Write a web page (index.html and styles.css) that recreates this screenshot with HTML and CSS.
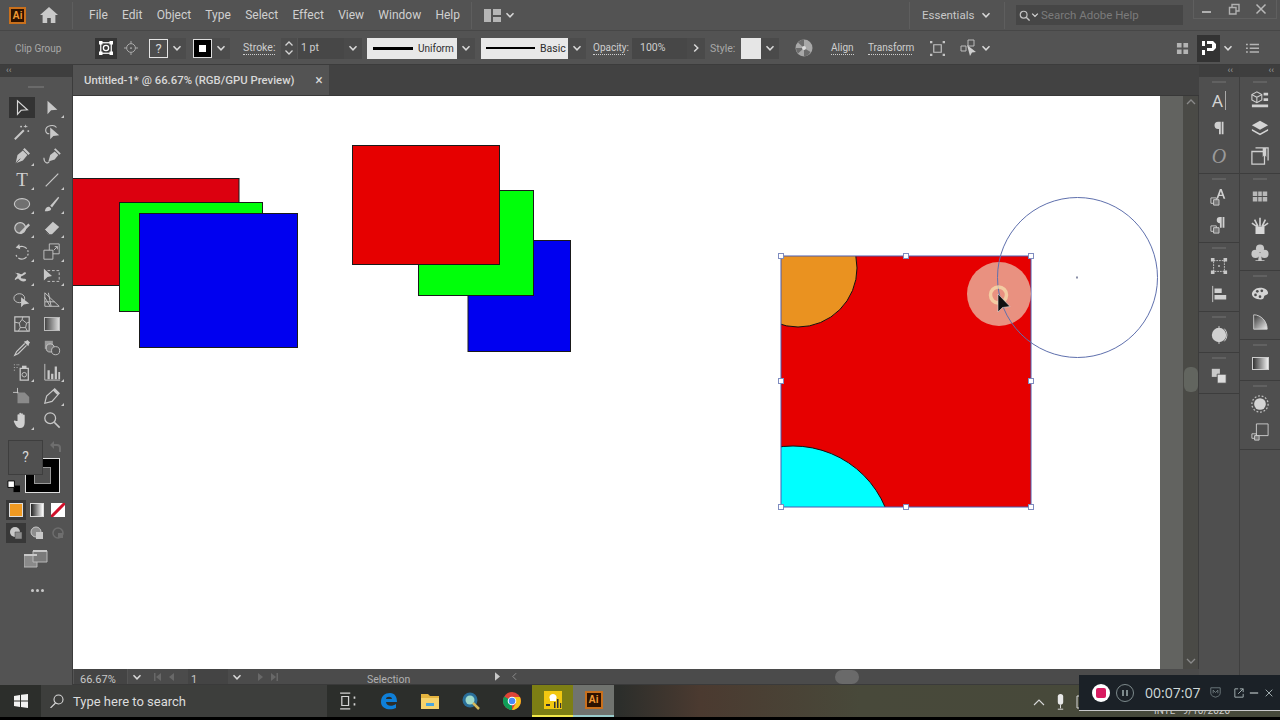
FILE: index.html
```html
<!DOCTYPE html>
<html lang="en">
<head>
    <meta charset="UTF-8">
    <title>Adobe Illustrator</title>
    <link rel="stylesheet" href="styles.css">
</head>
<body>
    <svg class="defs" width="0" height="0">
        <symbol id="chev" viewBox="0 0 10 10"><path d="M1.5 3.2 5 6.8l3.5-3.6" fill="none" stroke="#d8d8d8" stroke-width="1.5"/></symbol>
    </svg>

    <!-- menu bar -->
    <header class="menubar">
        <div class="ai-logo">Ai</div>
        <svg class="home" viewBox="0 0 18 16"><path d="M9 0 0 8h2.6v8h4.6v-5h3.6v5h4.6V8H18z" fill="#c9c9c9"/></svg>
        <div class="vsep home-sep"></div>
        <nav class="menu">
            <span>File</span><span>Edit</span><span>Object</span><span>Type</span><span>Select</span><span>Effect</span><span>View</span><span>Window</span><span>Help</span>
        </nav>
        <div class="vsep menu-sep"></div>
        <svg class="arrange" viewBox="0 0 17 13"><path d="M0 0h7v13H0zM9 0h8v6H9zM9 8h8v5H9z" fill="#b5b5b5"/></svg>
        <svg class="chev arrange-chev"><use href="#chev"/></svg>
        <div class="menubar-right">
            <div class="vsep"></div>
            <span class="workspace-name">Essentials</span>
            <svg class="chev"><use href="#chev"/></svg>
            <div class="vsep ws-sep"></div>
            <div class="helpsearch">
                <svg class="mag" viewBox="0 0 13 13"><circle cx="5.5" cy="5.5" r="4" fill="none" stroke="#c4c4c4" stroke-width="1.4"/><path d="m8.5 8.5 4 4" stroke="#c4c4c4" stroke-width="1.6"/></svg>
                <svg class="chev small"><use href="#chev"/></svg>
                <span>Search Adobe Help</span>
            </div>
            <div class="winctl">
                <svg viewBox="0 0 12 12"><path d="M1 8h9v2H1z" fill="#b0b0b0"/></svg>
                <svg viewBox="0 0 12 12"><path d="M1.5 4.5H8V11H1.5zM4 4V1.5h7V8H8.5" fill="none" stroke="#b0b0b0" stroke-width="1.4"/></svg>
                <svg viewBox="0 0 12 12"><path d="m1.5 1.5 9 9m0-9-9 9" stroke="#b8b8b8" stroke-width="1.5"/></svg>
            </div>
        </div>
    </header>

    <!-- control bar -->
    <section class="controlbar">
        <span class="clip-label">Clip Group</span>
        <div class="iso-btn">
            <svg viewBox="0 0 16 16"><rect x="2" y="2" width="12" height="12" fill="none" stroke="#fff" stroke-width="1.4"/><circle cx="8" cy="8" r="3" fill="none" stroke="#fff" stroke-width="1.5"/><path d="M0 0h4v4H0zM12 0h4v4h-4zM0 12h4v4H0zM12 12h4v4h-4z" fill="#fff"/></svg>
        </div>
        <svg class="target" viewBox="0 0 16 16"><circle cx="8" cy="8" r="5" fill="none" stroke="#b5b5b5"/><circle cx="8" cy="8" r="1" fill="#b5b5b5"/><path d="M8 0v3M8 13v3M0 8h3M13 8h3" stroke="#b5b5b5"/></svg>
        <div class="fill-swatch">?</div>
        <div class="cbchev"><svg class="chev"><use href="#chev"/></svg></div>
        <div class="stroke-swatch"><i></i></div>
        <div class="cbchev"><svg class="chev"><use href="#chev"/></svg></div>
        <span class="dotted stroke-label">Stroke:</span>
        <div class="stepper">
            <svg viewBox="0 0 10 18"><path d="M1.5 6.5 5 3l3.5 3.5M1.5 11.5 5 15l3.5-3.5" fill="none" stroke="#d4d4d4" stroke-width="1.3"/></svg>
        </div>
        <div class="field weight-field">1 pt</div>
        <div class="cbchev joined"><svg class="chev"><use href="#chev"/></svg></div>
        <div class="stroke-drop uniform"><i class="thick"></i><span>Uniform</span></div>
        <div class="cbchev"><svg class="chev"><use href="#chev"/></svg></div>
        <div class="stroke-drop basic"><i></i><span>Basic</span></div>
        <div class="cbchev"><svg class="chev"><use href="#chev"/></svg></div>
        <span class="dotted opacity-label">Opacity:</span>
        <div class="field opacity-field">100%</div>
        <div class="cbchev joined"><svg class="chev right"><use href="#chev"/></svg></div>
        <span class="style-label">Style:</span>
        <div class="style-swatch"></div>
        <div class="cbchev joined"><svg class="chev"><use href="#chev"/></svg></div>
        <svg class="recolor" viewBox="0 0 18 18"><circle cx="9" cy="9" r="8.5" fill="#a8a8a8"/><path d="M9 9 3 3.5A8 8 0 0 1 9 .5zM9 9l6.5 4A8 8 0 0 1 9 17.5zM9 9H1a8 8 0 0 0 2 5.5z" fill="#6c6c6c"/><circle cx="9" cy="9" r="2" fill="#dcdcdc"/></svg>
        <span class="dotted align-link">Align</span>
        <span class="dotted transform-link">Transform</span>
        <svg class="ctl-icon first-icon" viewBox="0 0 16 16"><path d="M4 4h8v8H4z" fill="none" stroke="#c4c4c4" stroke-width="1.2"/><path d="M0 0h2.5v2.5H0zM13.5 0H16v2.5h-2.5zM0 13.5h2.5V16H0zM13.5 13.5H16V16h-2.5z" fill="#c4c4c4"/></svg>
        <svg class="ctl-icon second-icon" viewBox="0 0 18 18"><path d="M1 7h5v5H1zM8 1h6v6H8z" fill="none" stroke="#bcbcbc"/><path d="m7 6 9 7-4 .5L10 17z" fill="#cfcfcf"/></svg>
        <svg class="chev second-chev"><use href="#chev"/></svg>
        <div class="cb-right">
            <svg class="ctl-icon" viewBox="0 0 14 14"><path d="M1 1h5v5H1zM8 1h5v5H8zM1 8h5v5H1zM8 8h5v5H8z" fill="#b4b4b4"/></svg>
            <div class="panel-toggle"><svg viewBox="0 0 14 16"><path d="M0 1h3v5H0zM0 10h3v5H0zM5 1h6l3 3v4l-3 3H5V8h5V4H5z" fill="#fff"/></svg></div>
            <svg class="chev"><use href="#chev"/></svg>
            <svg class="ctl-icon list-icon" viewBox="0 0 14 12"><path d="M0 1h2v1.5H0zM4 1h10v1.5H4zM0 5h2v1.5H0zM4 5h10v1.5H4zM0 9h2v1.5H0zM4 9h10v1.5H4z" fill="#b4b4b4"/></svg>
        </div>
    </section>

    <main class="workspace">
        <!-- tools -->
        <aside class="toolbar">
            <div class="collapse">&lsaquo;&lsaquo;</div>
            <div class="grip"></div>
            <div class="tools">
                <div class="tool active"><svg viewBox="0 0 20 20"><path d="M5 2v15l4-4.5 7-.5z" fill="none" stroke="#d8d8d8" stroke-width="1.3"/></svg></div>
                <div class="tool more"><svg viewBox="0 0 20 20"><path d="M5 2v15l4-4.5 7-.5z" fill="#c8c8c8"/></svg></div>
                <div class="tool"><svg viewBox="0 0 20 20"><path d="m2 18 10-10" stroke="#c8c8c8" stroke-width="2.2"/><path d="M14 2v3M12 4h4M17 8v2M16 9h2M9 3v2M8 4h2" stroke="#c8c8c8"/></svg></div>
                <div class="tool"><svg viewBox="0 0 20 20"><path d="M3 8c0-5 9-7 12-3M3 8c0 3 2 4 4 4" fill="none" stroke="#c8c8c8" stroke-width="1.2"/><path d="M8 5v13l3.5-3.5 6.5-1z" fill="#c8c8c8"/></svg></div>
                <div class="tool more"><svg viewBox="0 0 20 20"><path d="M3 18 5 9l6-5 5 5-5 6z" fill="#c8c8c8"/><path d="m12 2 6 6" stroke="#c8c8c8" stroke-width="2.5"/><path d="m3 18 5-5" stroke="#535353"/></svg></div>
                <div class="tool"><svg viewBox="0 0 20 20"><path d="M6 16 8 9l5-4 4 4-4 5z" fill="#c8c8c8"/><path d="m13 2 6 6" stroke="#c8c8c8" stroke-width="2"/><path d="M1 12c0 6 5 7 6 4" fill="none" stroke="#c8c8c8" stroke-width="1.2"/></svg></div>
                <div class="tool more"><span class="tool-t">T</span></div>
                <div class="tool more"><svg viewBox="0 0 20 20"><path d="m3 17 14-14" stroke="#c8c8c8" stroke-width="1.3"/></svg></div>
                <div class="tool more"><svg viewBox="0 0 20 20"><ellipse cx="10" cy="10" rx="8.5" ry="6" fill="#707070" stroke="#c8c8c8" stroke-width="1.2"/></svg></div>
                <div class="tool more"><svg viewBox="0 0 20 20"><path d="M2 18c1-4 2-5 5-5l2 2c0 3-3 3-7 3z" fill="#c8c8c8"/><path d="m8 12 9-10 1 1-8 11z" fill="#c8c8c8"/></svg></div>
                <div class="tool more"><svg viewBox="0 0 20 20"><circle cx="8" cy="10" r="6" fill="#707070" stroke="#c8c8c8" stroke-width="1.4"/><path d="m8 16 10-10" stroke="#c8c8c8" stroke-width="2.5"/></svg></div>
                <div class="tool more"><svg viewBox="0 0 20 20"><path d="m2 12 9-9 7 6-8 8H6z" fill="#c8c8c8"/><path d="m2 12 5 5" stroke="#535353"/></svg></div>
                <div class="tool more"><svg viewBox="0 0 20 20"><path d="M6 5a7 7 0 1 1-3 7" fill="none" stroke="#c8c8c8" stroke-width="1.3" stroke-dasharray="10 2 2 2 2 2"/><path d="m7 1-4 4 5 2z" fill="#c8c8c8"/></svg></div>
                <div class="tool more"><svg viewBox="0 0 20 20"><path d="M7 1h11v11H7z" fill="none" stroke="#c8c8c8"/><path d="M1 8h10v10H1z" fill="#535353" stroke="#c8c8c8"/><path d="m12 8 4-4m-3 0h3v3" fill="none" stroke="#c8c8c8"/></svg></div>
                <div class="tool more"><svg viewBox="0 0 20 20"><path d="M3 8c2-3 4 0 6 0s3-3 5-2-2 3-4 4-2 3 2 3 3 3 0 3-5-2-6-3-4 3-4 1 3-3 3-5-3 0-2-4z" fill="#c8c8c8"/></svg></div>
                <div class="tool more"><svg viewBox="0 0 20 20"><path d="M1 2v13l4-4 5-1z" fill="#c8c8c8"/><path d="M5 4h13v12H5" fill="none" stroke="#c8c8c8" stroke-dasharray="3 2"/></svg></div>
                <div class="tool more"><svg viewBox="0 0 20 20"><ellipse cx="7" cy="8" rx="6" ry="5" fill="none" stroke="#c8c8c8"/><path d="M9 7v11l3-3 6-1z" fill="#c8c8c8"/></svg></div>
                <div class="tool more"><svg viewBox="0 0 20 20"><path d="M2 2v15h16zM2 7l6 10M2 12h11M6 2l3 15" fill="none" stroke="#c8c8c8"/></svg></div>
                <div class="tool"><svg viewBox="0 0 20 20"><path d="M2 2h16v16H2z" fill="none" stroke="#c8c8c8" stroke-width="1.3"/><path d="M2 8l5 1 3-4 1-3M7 9l1 5-2 4M10 5l5 4 3-1M8 14l6 0 1-5M14 14l2 4" fill="none" stroke="#c8c8c8"/></svg></div>
                <div class="tool"><div class="tool-grad"></div></div>
                <div class="tool"><svg viewBox="0 0 20 20"><path d="m13 5-9 9-2 4 4-2 9-9" fill="none" stroke="#c8c8c8" stroke-width="1.3"/><path d="m12 3 5 5 1-3 1-1-3-3-1 1z" fill="#c8c8c8"/></svg></div>
                <div class="tool"><svg viewBox="0 0 20 20"><path d="M2 2h9v9H2z" fill="#9a9a9a"/><circle cx="8" cy="10" r="4.5" fill="#777" stroke="#c8c8c8"/><circle cx="14" cy="13" r="4.5" fill="#535353" stroke="#c8c8c8"/></svg></div>
                <div class="tool more"><svg viewBox="0 0 20 20"><path d="M8 6h9v13H8z" fill="none" stroke="#c8c8c8" stroke-width="1.4"/><circle cx="12.5" cy="13" r="2.5" fill="none" stroke="#c8c8c8"/><path d="M10 3h5v3h-5z" fill="#c8c8c8"/><path d="M1 2h1M4 2h1M1 5h1M4 5h1M6 2h1M1 8h1" stroke="#c8c8c8"/></svg></div>
                <div class="tool more"><svg viewBox="0 0 20 20"><path d="M2 1v18h17" fill="none" stroke="#c8c8c8"/><path d="M5 8h2.5v10H5zM9 12h2.5v6H9zM13 4h2.5v14H13zM17 10h2v8h-2z" fill="#c8c8c8"/></svg></div>
                <div class="tool"><svg viewBox="0 0 20 20"><path d="M5 6h8l5 5v7H5z" fill="#8a8a8a"/><path d="M0 6h6M5 1v6" stroke="#c8c8c8"/></svg></div>
                <div class="tool more"><svg viewBox="0 0 20 20"><path d="m2 18 2-8 9-8 5 5-8 9z" fill="none" stroke="#c8c8c8" stroke-width="1.3"/><path d="m11 4 5 5 2-2-5-5z" fill="#c8c8c8"/></svg></div>
                <div class="tool more"><svg viewBox="0 0 20 20"><path d="M5 11V4.5a1 1 0 0 1 2 0V9V3a1 1 0 0 1 2 0v6V3.5a1 1 0 0 1 2 0V9V5a1 1 0 0 1 2 0v8c0 4-2 6-5 6-4 0-5-3-7-7-.5-1 1-2 2-1z" fill="#d0d0d0"/></svg></div>
                <div class="tool"><svg viewBox="0 0 20 20"><circle cx="8" cy="8" r="6" fill="none" stroke="#c8c8c8" stroke-width="1.4"/><path d="m12.5 12.5 6 6" stroke="#c8c8c8" stroke-width="1.8"/></svg></div>
            </div>

            <div class="fillstroke">
                <div class="stroke-box"><i></i></div>
                <div class="fill-box">?</div>
                <svg class="swap" viewBox="0 0 14 14"><path d="M4 0h7v7H4z" fill="#000" transform="translate(3 6)"/><path d="M1 1h7v7H1z" fill="#fff" stroke="#000"/></svg>
                <svg class="undo" viewBox="0 0 12 12"><path d="M1 4h6a3 3 0 0 1 3 3v4" fill="none" stroke="#6e6e6e" stroke-width="2"/><path d="M4 0v8L0 4z" fill="#6e6e6e"/></svg>
            </div>
            <div class="modes">
                <div class="mode selected"><i class="orange"></i></div>
                <div class="mode"><i class="grad"></i></div>
                <div class="mode"><svg viewBox="0 0 14 14"><path d="M0 0h14v14H0z" fill="#fff"/><path d="m0 14 14-14" stroke="#d0102a" stroke-width="3"/></svg></div>
            </div>
            <div class="modes draw">
                <div class="mode selected"><svg viewBox="0 0 14 14"><circle cx="6" cy="6" r="5" fill="#c8c8c8"/><path d="M6 6h7v7H6z" fill="#8d8d8d" stroke="#3e3e3e" stroke-width=".5"/></svg></div>
                <div class="mode"><svg viewBox="0 0 14 14"><circle cx="6" cy="6" r="5" fill="#8d8d8d" stroke="#c8c8c8"/><path d="M6 6h7v7H6z" fill="#c8c8c8"/></svg></div>
                <div class="mode"><svg viewBox="0 0 14 14"><circle cx="7" cy="7" r="5" fill="none" stroke="#6e6e6e" stroke-width="1.5"/><path d="M7 7h5v5H7z" fill="#6e6e6e"/></svg></div>
            </div>
            <svg class="screenmode" viewBox="0 0 24 18"><path d="M0 5h13v12H0z" fill="#8a8a8a" stroke="#b8b8b8"/><path d="M9 1h14v11H9z" fill="#7a7a7a" stroke="#b8b8b8"/><path d="M0 5h13M9 1h14" stroke="#c8c8c8" stroke-width="2"/></svg>
            <div class="dots"><i></i><i></i><i></i></div>
        </aside>

        <!-- document -->
        <div class="doc">
            <div class="tabs">
                <div class="tab"><span>Untitled-1* @ 66.67% (RGB/GPU Preview)</span><b>&times;</b></div>
            </div>
            <div class="doc-main">
                <div class="canvas">
                    <svg class="art" viewBox="73 96 1087 573">
                        <defs>
                            <clipPath id="bigclip"><rect x="781" y="256" width="250" height="251"/></clipPath>
                        </defs>
                        <g stroke="#1a1a1a" stroke-width="1">
                            <rect x="70" y="178.5" width="169" height="107" fill="#dc000f"/>
                            <rect x="119.5" y="202.5" width="143" height="109" fill="#00ff0a"/>
                            <rect x="139.5" y="213.5" width="158" height="134" fill="#0000f0"/>
                            <rect x="468" y="240.5" width="102.5" height="111" fill="#0000f0"/>
                            <rect x="418.5" y="190.5" width="115" height="105" fill="#00ff0a"/>
                            <rect x="352.5" y="145.5" width="147" height="119" fill="#e60000"/>
                        </g>
                        <rect x="781" y="256" width="250" height="251" fill="#e60000"/>
                        <g clip-path="url(#bigclip)" stroke="#111" stroke-width="1">
                            <circle cx="798" cy="268" r="59" fill="#ea9220"/>
                            <circle cx="793" cy="546" r="100" fill="#00ffff"/>
                        </g>
                        <rect x="781" y="256" width="250" height="251" fill="none" stroke="#4a5cb0" stroke-width="1"/>
                        <circle cx="999" cy="294" r="32" fill="#eab5a0" fill-opacity=".8"/>
                        <circle cx="1077.5" cy="277.5" r="80" fill="none" stroke="#5f70ad" stroke-width="1"/>
                        <rect x="1076" y="276.5" width="2" height="2" fill="#8a8fa8"/>
                        <g fill="#fff" stroke="#7f8cc0" stroke-width="1">
                            <rect x="778.5" y="253.5" width="5" height="5"/>
                            <rect x="903.5" y="253.5" width="5" height="5"/>
                            <rect x="1028.5" y="253.5" width="5" height="5"/>
                            <rect x="778.5" y="378.5" width="5" height="5"/>
                            <rect x="1028.5" y="378.5" width="5" height="5"/>
                            <rect x="778.5" y="504.5" width="5" height="5"/>
                            <rect x="903.5" y="504.5" width="5" height="5"/>
                            <rect x="1028.5" y="504.5" width="5" height="5"/>
                        </g>
                        <circle cx="998.5" cy="295" r="8" fill="none" stroke="#f6e5b0" stroke-width="3.5" stroke-opacity=".7"/>
                        <path d="M998 294v18l4.5-4.5 7.5-1z" fill="#111" stroke="#ddd" stroke-width=".6"/>
                    </svg>
                </div>
                <div class="side-strip"></div>
                <div class="vscroll">
                    <svg class="sc-up" viewBox="0 0 10 6"><path d="m1 5 4-4 4 4" fill="none" stroke="#8a8a8a" stroke-width="1.3"/></svg>
                    <div class="vthumb"></div>
                    <svg class="sc-down" viewBox="0 0 10 6"><path d="m1 1 4 4 4-4" fill="none" stroke="#8a8a8a" stroke-width="1.3"/></svg>
                </div>
            </div>
            <footer class="status">
                <div class="zoom-field">66.67%</div>
                <div class="st-chev"><svg class="chev"><use href="#chev"/></svg></div>
                <svg class="st-nav" viewBox="0 0 26 8"><path d="M0 0h1.5v8H0zM7 0v8L2 4zM20 0v8l-5-4z" fill="#686868"/></svg>
                <div class="page-field">1</div>
                <div class="st-chev"><svg class="chev"><use href="#chev"/></svg></div>
                <svg class="st-nav after" viewBox="0 0 26 8"><path d="M6 0v8l5-4zM19 0v8l5-4zM24.5 0H26v8h-1.5z" fill="#686868"/></svg>
                <span class="st-label">Selection</span>
                <svg class="st-play" viewBox="0 0 6 10"><path d="M0 0v10l6-5z" fill="#c8c8c8"/></svg>
                <svg class="st-back" viewBox="0 0 6 10"><path d="M5 1 1 5l4 4" fill="none" stroke="#999"/></svg>
                <div class="hthumb"></div>
            </footer>
        </div>

        <!-- collapsed panels -->
        <aside class="panels">
            <div class="panel-col">
                <div class="collapse">&lsaquo;&lsaquo;</div>
                <div class="pgroup">
                    <div class="picon"><span class="char-a">A</span></div>
                    <div class="picon"><svg viewBox="0 0 20 20"><path d="M12 3H9a4 4 0 0 0 0 8h1v6h2zM13 3h2v14h-2z" fill="#d0d0d0"/></svg></div>
                    <div class="picon"><span class="open-o">O</span></div>
                </div>
                <div class="pgroup">
                    <div class="picon"><svg viewBox="0 0 20 20"><path d="m7 12 4-11h2l4 11h-2l-1-3h-4l-1 3zm3.7-4.5h2.6L12 3.5z" fill="#d0d0d0"/><path d="M1 11h6v6H1z" fill="none" stroke="#d0d0d0"/><path d="M4 13h6v6H4z" fill="#777" stroke="#d0d0d0"/></svg></div>
                    <div class="picon"><svg viewBox="0 0 20 20"><path d="M13 1h-2a3 3 0 0 0 0 7v5h2zM14 1h2v12h-2z" fill="#d0d0d0"/><path d="M1 11h6v6H1z" fill="none" stroke="#d0d0d0"/><path d="M4 13h6v6H4z" fill="#777" stroke="#d0d0d0"/></svg></div>
                </div>
                <div class="pgroup">
                    <div class="picon"><svg viewBox="0 0 20 20"><path d="M4 4h12v12H4z" fill="none" stroke="#c8c8c8" stroke-dasharray="2 1"/><path d="M1 1h4v4H1zM15 1h4v4h-4zM1 15h4v4H1zM15 15h4v4h-4z" fill="#c8c8c8"/><circle cx="10" cy="10" r="1" fill="#c8c8c8"/></svg></div>
                    <div class="picon"><svg viewBox="0 0 20 20"><path d="M3 1v18" stroke="#d0d0d0"/><path d="M5 4h8v5H5zM5 11h13v5H5z" fill="#d0d0d0"/></svg></div>
                </div>
                <div class="pgroup">
                    <div class="picon"><svg viewBox="0 0 20 20"><circle cx="10" cy="10" r="8" fill="#d0d0d0"/><path d="M16 3a10 10 0 0 1 0 14M10 0v3M10 17v3" fill="none" stroke="#d0d0d0"/></svg></div>
                </div>
                <div class="pgroup">
                    <div class="picon"><svg viewBox="0 0 20 20"><path d="M2 2h9v9H2z" fill="#c8c8c8"/><path d="M8 8h10v10H8z" fill="#dcdcdc" stroke="#4e4e4e"/></svg></div>
                </div>
            </div>
            <div class="panel-col">
                <div class="collapse">&lsaquo;&lsaquo;</div>
                <div class="pgroup">
                    <div class="picon"><svg viewBox="0 0 20 20"><path d="M6.5 1 1 4v6l5.5 3L12 10V4zM1 4l5.5 3L12 4M6.5 7v6" fill="none" stroke="#d0d0d0" stroke-width="1.2"/><path d="M14 2h5v3h-5zM14 8h5v3h-5zM1 15h18v3H1z" fill="#d0d0d0"/></svg></div>
                    <div class="picon"><svg viewBox="0 0 20 20"><path d="m10 2 9 5-9 5-9-5z" fill="#d4d4d4"/><path d="m1 11 9 5 9-5v2l-9 5-9-5z" fill="#d4d4d4"/></svg></div>
                    <div class="picon"><svg viewBox="0 0 20 20"><path d="M5 1h14v14" fill="none" stroke="#d0d0d0" stroke-width="1.4"/><path d="M1 5h14v14H1z" fill="none" stroke="#d0d0d0" stroke-width="1.4"/><path d="M13 1h4v10l-2-2-2 2z" fill="#d0d0d0"/></svg></div>
                </div>
                <div class="pgroup">
                    <div class="picon"><svg viewBox="0 0 20 20"><path d="M2 4h5v5H2zM8 4h4v5H8zM13 4h5v5h-5zM2 10h5v5H2zM8 10h4v5H8zM13 10h5v5h-5z" fill="#b8b8b8"/></svg></div>
                    <div class="picon"><svg viewBox="0 0 20 20"><path d="M5 12h10v8H5z" fill="#d8d8d8"/><path d="M8 12 4 4M10 12V2M12 12l4-8M7 12 1 8M13 12l6-4" stroke="#d0d0d0" stroke-width="1.8"/></svg></div>
                    <div class="picon"><svg viewBox="0 0 20 20"><circle cx="10" cy="5" r="4.5" fill="#c8c8c8"/><circle cx="5" cy="11" r="4.5" fill="#c8c8c8"/><circle cx="15" cy="11" r="4.5" fill="#c8c8c8"/><path d="M9 10h2l1 8h3v1H5v-1h3z" fill="#c8c8c8"/></svg></div>
                </div>
                <div class="pgroup">
                    <div class="picon"><svg viewBox="0 0 20 20"><path d="M10 3c6 0 9 3 9 6 0 2-3 2-4 3s0 4-4 4C5 16 1 13 1 10s4-7 9-7z" fill="#d4d4d4"/><circle cx="7" cy="7" r="1.5" fill="#4e4e4e"/><circle cx="12" cy="6.5" r="1.5" fill="#4e4e4e"/><circle cx="5" cy="11" r="1.5" fill="#4e4e4e"/><circle cx="10" cy="13" r="1.5" fill="#4e4e4e"/></svg></div>
                    <div class="picon"><svg viewBox="0 0 20 20"><defs><linearGradient id="pg" x1="0" y1="0" x2="1" y2="1"><stop offset="0" stop-color="#333"/><stop offset="1" stop-color="#eee"/></linearGradient></defs><path d="M3 2c8 0 15 7 15 16H3z" fill="url(#pg)" stroke="#d0d0d0"/></svg></div>
                </div>
                <div class="pgroup">
                    <div class="picon"><div class="gradient-icon"></div></div>
                </div>
                <div class="pgroup">
                    <div class="picon"><svg viewBox="0 0 20 20"><circle cx="10" cy="10" r="6.5" fill="#d4d4d4"/><circle cx="10" cy="10" r="9" fill="none" stroke="#c0c0c0" stroke-width="1.4" stroke-dasharray="2 2"/></svg></div>
                    <div class="picon"><svg viewBox="0 0 20 20"><path d="M6 1h13v13H6z" fill="none" stroke="#d0d0d0"/><path d="M1 12h5v5H1z" fill="none" stroke="#d0d0d0"/><path d="M4 14h5v5H4z" fill="#777" stroke="#d0d0d0"/></svg></div>
                </div>
            </div>
        </aside>
    </main>

    <!-- windows taskbar -->
    <footer class="taskbar">
        <div class="start"><svg viewBox="0 0 14 14"><path d="M0 2 6 1v5.5H0zM7 .8 14 0v6.5H7zM0 7.5h6V13l-6-1zM7 7.5h7V14l-7-1z" fill="#f2f2f2"/></svg></div>
        <div class="search">
            <svg viewBox="0 0 14 14"><circle cx="8.5" cy="5.5" r="4.5" fill="none" stroke="#d8d8d8" stroke-width="1.1"/><path d="M5.5 9 .5 14" stroke="#d8d8d8" stroke-width="1.1"/></svg>
            <span>Type here to search</span>
        </div>
        <div class="task-icons">
            <div class="task"><svg viewBox="0 0 16 16"><path d="M1 1h9M1 15h9M2.5 4h6v8h-6z" fill="none" stroke="#d4d4d4" stroke-width="1.1"/><path d="M13 4h1.500v2H13zM13 10h1.500v2H13z" fill="#d4d4d4"/></svg></div>
            <div class="task"><svg viewBox="0 0 18 18"><path d="M1 10C1 4 5 1 10 1c5 0 7 4 7 9H6c0 4 6 5 10 2v4c-6 3-15 1-15-6zm5-3h6c0-3-6-3-6 0z" fill="#0f7fd8"/></svg></div>
            <div class="task"><svg viewBox="0 0 18 16"><path d="M0 1h7l2 2h9v13H0z" fill="#e5b43f"/><path d="M0 5h18v11H0z" fill="#f6d36c"/><path d="M5 10h8v3H5z" fill="#4aa6dd"/></svg></div>
            <div class="task"><svg viewBox="0 0 18 18"><circle cx="8" cy="8" r="7.5" fill="#2a6f9a"/><circle cx="8" cy="8" r="4.5" fill="#9fd9c9"/><path d="m11 11 6 6" stroke="#d6b85a" stroke-width="2.5"/></svg></div>
            <div class="task"><svg viewBox="0 0 18 18"><circle cx="9" cy="9" r="9" fill="#dd4437"/><path d="M9 9 1.2 4.5A9 9 0 0 0 9 18z" fill="#0f9d58"/><path d="M9 5h7.900A9 9 0 0 1 9 18l4-7z" fill="#f5c518"/><circle cx="9" cy="9" r="4.300" fill="#fff"/><circle cx="9" cy="9" r="3.300" fill="#4a8af4"/></svg></div>
            <div class="task pbi"><svg viewBox="0 0 18 18"><path d="M0 0h18v18H0z" fill="#f2c811"/><path d="M9 3a3.5 3.5 0 0 1 3 5.5V10H6V8.5A3.5 3.5 0 0 1 9 3z" fill="#fff"/><path d="M10 17v-6h1.500v6zM13 17v-9h1.500v9zM16 17v-5h1.200v5zM2 13h4v2H2z" fill="#333"/></svg></div>
            <div class="task ai-task"><div class="ai-logo">Ai</div></div>
        </div>
        <div class="tray">
            <svg viewBox="0 0 12 8"><path d="m1 7 5-5 5 5" fill="none" stroke="#d8d8d8" stroke-width="1.1"/></svg>
            <svg class="mic" viewBox="0 0 10 18"><rect x="2" y="0" width="6" height="12" rx="3" fill="#e8e8e8"/><path d="M5 12v4M2 17h6" stroke="#e8e8e8"/></svg>
            <svg viewBox="0 0 12 14"><path d="M1 1h10v12H1z" fill="none" stroke="#d8d8d8"/></svg>
        </div>
        <div class="clock">INTL &nbsp; 9/10/2020</div>
    </footer>

    <!-- screen recorder widget -->
    <div class="recorder">
        <div class="rec-stop"><i></i></div>
        <div class="rec-pause"><i></i><i></i></div>
        <span class="rec-time">00:07:07</span>
        <svg class="rec-shield" viewBox="0 0 14 14"><path d="M1 1h12v7c0 3-3 4-6 5-3-1-6-2-6-5z" fill="none" stroke="#7d8a8c"/><path d="M4 8V4l3 3 3-3v4" fill="none" stroke="#7d8a8c"/></svg>
        <svg class="rec-ctl expand" viewBox="0 0 12 12"><path d="M5 1H1v10h10V7M7 1h4v4M11 1 5 7" fill="none" stroke="#9eaaac" stroke-width="1.2"/></svg>
        <svg class="rec-ctl" viewBox="0 0 12 12"><path d="M1 6h10" stroke="#b4bcbd" stroke-width="1.5"/></svg>
        <svg class="rec-ctl" viewBox="0 0 12 12"><path d="m2 2 8 8m0-8-8 8" stroke="#9eaaac" stroke-width="1.2"/></svg>
    </div>
</body>
</html>
```

FILE: styles.css
```css
* {
    box-sizing: border-box;
}
html, body {
    margin: 0;
    height: 100%;
}
body {
    width: 1280px;
    height: 720px;
    overflow: hidden;
    position: relative;
    display: flex;
    flex-direction: column;
    background-color: #535353;
    color: #d4d4d4;
    font-family: Roboto, "Noto Sans", sans-serif;
    font-size: 12px;
}
svg {
    display: block;
    flex: none;
}
.defs {
    position: absolute;
}
.chev {
    width: 10px;
    height: 10px;
}
.chev.small {
    width: 8px;
    height: 8px;
}
.chev.right {
    transform: rotate(-90deg);
}
.vsep {
    width: 1px;
    height: 27px;
    background-color: #5e5e5e;
}

/* menu bar */
.menubar {
    height: 31px;
    display: flex;
    align-items: center;
    padding-left: 9px;
    background-color: #535353;
    border-bottom: 1px solid #474747;
}
.ai-logo {
    width: 17px;
    height: 17px;
    background-color: #2d1200;
    border: 2px solid #c9701c;
    color: #f09a35;
    font-family: "Liberation Sans", sans-serif;
    font-size: 10px;
    font-weight: bold;
    line-height: 13px;
    text-align: center;
}
.home {
    width: 18px;
    height: 16px;
    margin-left: 14px;
}
.home-sep {
    margin-left: 14px;
}
.menu {
    display: flex;
    gap: 14.25px;
    margin-left: 16px;
    font-size: 12px;
    color: #d0d0d0;
}
.menu-sep {
    margin-left: 11px;
}
.arrange {
    width: 17px;
    height: 13px;
    margin-left: 12px;
}
.arrange-chev {
    margin-left: 4px;
}
.menubar-right {
    margin-left: auto;
    display: flex;
    align-items: center;
    height: 100%;
}
.workspace-name {
    width: 50px;
    margin-left: 12px;
    margin-right: 9px;
    color: #c8c8c8;
    font-size: 11.5px;
    white-space: nowrap;
}
.ws-sep {
    margin-left: 13px;
}
.helpsearch {
    width: 167px;
    height: 20px;
    margin-left: 11px;
    padding-left: 3px;
    display: flex;
    align-items: center;
    gap: 1px;
    background-color: #464646;
    color: #7b7b7b;
    font-size: 11.5px;
}
.helpsearch span {
    margin-left: 1px;
}
.mag {
    width: 11px;
    height: 11px;
}
.winctl {
    width: 84px;
    height: 19px;
    margin-left: 10px;
    margin-right: 3px;
    margin-bottom: 12px;
    display: flex;
    align-items: center;
    justify-content: space-between;
    padding: 0 9px 0 7px;
    border: 1px solid #5f5f5f;
    border-top: none;
}
.winctl svg {
    width: 12px;
    height: 12px;
}

/* control bar */
.controlbar {
    height: 34px;
    display: flex;
    align-items: center;
    padding: 1px 0 0 15px;
    background-color: #535353;
    border-bottom: 1px solid #3c3c3c;
    font-size: 10.5px;
    color: #cfcfcf;
}
.clip-label {
    width: 46px;
    white-space: nowrap;
    color: #a8a8a8;
    font-size: 10px;
}
.iso-btn {
    width: 22px;
    height: 21px;
    margin-left: 34px;
    display: flex;
    align-items: center;
    justify-content: center;
    background-color: #353535;
}
.iso-btn svg {
    width: 14px;
    height: 14px;
}
.target {
    width: 14px;
    height: 14px;
    margin-left: 7px;
}
.fill-swatch {
    width: 19px;
    height: 19px;
    margin-left: 11px;
    border: 1px solid #e4e4e4;
    background-color: #4d4d4d;
    color: #d8d8d8;
    text-align: center;
    line-height: 17px;
    font-size: 13px;
}
.cbchev {
    width: 18px;
    height: 21px;
    display: flex;
    align-items: center;
    justify-content: center;
    background-color: #4c4c4c;
}
.cbchev.joined {
    background-color: #4a4a4a;
}
.stroke-swatch {
    width: 19px;
    height: 19px;
    margin-left: 7px;
    padding: 5px;
    background-color: #000;
    border: 1px solid #ddd;
}
.stroke-swatch i {
    display: block;
    width: 100%;
    height: 100%;
    background-color: #fff;
}
.dotted {
    border-bottom: 1px dotted #cfcfcf;
    font-size: 10px;
    line-height: 12px;
    white-space: nowrap;
}
.stroke-label {
    width: 32px;
    margin-left: 13px;
    font-size: 10.5px;
}
.stepper {
    width: 17px;
    height: 21px;
    margin-left: 6px;
    background-color: #4c4c4c;
    border-right: 1px solid #555;
}
.stepper svg {
    width: 10px;
    height: 18px;
    margin: 1px auto;
}
.field {
    height: 21px;
    line-height: 20px;
    padding-left: 3px;
    background-color: #474747;
    color: #cfcfcf;
}
.weight-field {
    width: 46px;
}
.stroke-drop {
    height: 21px;
    display: flex;
    align-items: center;
    background-color: #e8e8e8;
    color: #2c2c2c;
    white-space: nowrap;
}
.stroke-drop i {
    display: block;
    height: 2px;
    background-color: #000;
}
.stroke-drop i.thick {
    height: 3px;
}
.uniform {
    width: 90px;
    margin-left: 5px;
    padding-left: 6px;
    font-size: 10px;
}
.uniform i {
    width: 40px;
    margin-right: 5px;
}
.basic {
    width: 87px;
    margin-left: 6px;
    padding-left: 5px;
}
.basic i {
    width: 49px;
    margin-right: 5px;
}
.opacity-label {
    width: 32px;
    margin-left: 7px;
}
.opacity-field {
    width: 55px;
    margin-left: 7px;
    padding-left: 8px;
}
.style-label {
    width: 25px;
    margin-left: 5px;
    color: #a8a8a8;
}
.style-swatch {
    width: 20px;
    height: 21px;
    margin-left: 6px;
    background-color: #e6e6e6;
}
.recolor {
    width: 18px;
    height: 18px;
    margin-left: 16px;
}
.align-link {
    width: 23px;
    margin-left: 18px;
}
.transform-link {
    width: 44px;
    margin-left: 14px;
}
.ctl-icon {
    width: 15px;
    height: 15px;
}
.first-icon {
    margin-left: 18px;
}
.second-icon {
    width: 18px;
    height: 18px;
    margin-left: 15px;
}
.second-chev {
    margin-left: 3px;
}
.cb-right {
    margin-left: auto;
    margin-right: 21px;
    display: flex;
    align-items: center;
    gap: 3px;
}
.cb-right .ctl-icon {
    width: 13px;
    height: 13px;
    margin-right: 5px;
}
.panel-toggle {
    width: 23px;
    height: 27px;
    display: flex;
    align-items: center;
    justify-content: center;
    background-color: #333;
}
.panel-toggle svg {
    width: 14px;
    height: 16px;
}
.cb-right .list-icon {
    margin-left: 10px;
    margin-right: 0;
}

/* workspace */
.workspace {
    height: 620px;
    display: flex;
}
.collapse {
    height: 12px;
    padding-left: 6px;
    background-color: #3e3e3e;
    color: #a0a0a0;
    font-size: 9px;
    line-height: 10px;
}
.toolbar {
    width: 73px;
    flex: none;
    position: relative;
    background-color: #535353;
    border-right: 1px solid #3b3b3b;
}
.grip {
    height: 19px;
    background: linear-gradient(#6a6a6a, #6a6a6a) center / 16px 2px no-repeat;
}
.tools {
    display: grid;
    grid-template-columns: 30px 30px;
    grid-auto-rows: 24px;
    padding-left: 7px;
}
.tool {
    position: relative;
    display: flex;
    align-items: center;
    justify-content: center;
}
.tool svg {
    width: 18px;
    height: 18px;
}
.tool.active {
    width: 26px;
    margin: 1px 0 2px 2px;
    background-color: #333;
}
.tool.more::after {
    content: "";
    position: absolute;
    right: 3px;
    bottom: 2px;
    border-left: 3px solid transparent;
    border-bottom: 3px solid #c8c8c8;
}
.tool-t {
    font-family: "Liberation Serif", serif;
    font-size: 19px;
    color: #d0d0d0;
}
.tool-grad {
    width: 16px;
    height: 14px;
    background: linear-gradient(to right, #444, #ddd);
    border: 1px solid #bbb;
}
.fillstroke {
    height: 54px;
    margin-top: 8px;
    position: relative;
}
.fill-box {
    position: absolute;
    left: 8px;
    top: 0;
    width: 35px;
    height: 35px;
    background-color: #505050;
    border: 1px solid #3e3e3e;
    color: #d8d8d8;
    font-size: 14px;
    line-height: 33px;
    text-align: center;
}
.stroke-box {
    position: absolute;
    left: 25px;
    top: 18px;
    width: 35px;
    height: 35px;
    padding: 8px;
    background-color: #000;
    border: 1px solid #ddd;
}
.stroke-box i {
    display: block;
    width: 100%;
    height: 100%;
    background-color: #505050;
    border: 1px solid #999;
}
.swap {
    position: absolute;
    left: 7px;
    top: 40px;
    width: 13px;
    height: 13px;
}
.undo {
    position: absolute;
    left: 50px;
    top: 1px;
    width: 12px;
    height: 12px;
}
.modes {
    display: flex;
    gap: 1px;
    margin-top: 6px;
    padding-left: 6px;
}
.modes.draw {
    margin-top: 3px;
    height: 20px;
}
.mode {
    width: 20px;
    height: 20px;
    display: flex;
    align-items: center;
    justify-content: center;
}
.mode.selected {
    background-color: #383838;
}
.mode svg, .mode i {
    display: block;
    width: 14px;
    height: 14px;
}
.mode i.orange {
    background-color: #f09a22;
    border: 1px solid #ddd;
}
.mode i.grad {
    background: linear-gradient(to right, #222, #fff);
    border: 1px solid #ddd;
}
.screenmode {
    width: 24px;
    height: 18px;
    margin: 7px 0 0 24px;
}
.dots {
    display: flex;
    gap: 2px;
    margin: 21px 0 0 31px;
}
.dots i {
    display: block;
    width: 3px;
    height: 3px;
    border-radius: 50%;
    background-color: #c8c8c8;
}

/* document */
.doc {
    flex: 1;
    min-width: 0;
    display: flex;
    flex-direction: column;
}
.tabs {
    height: 31px;
    background-color: #424242;
    border-bottom: 1px solid #383838;
}
.tab {
    width: 256px;
    height: 30px;
    padding-left: 11px;
    display: flex;
    align-items: center;
    justify-content: space-between;
    background-color: #535353;
    font-size: 11.35px;
    font-weight: 500;
    color: #d8d8d8;
    white-space: nowrap;
}
.tab b {
    width: 20px;
    font-size: 14px;
    font-weight: normal;
    text-align: center;
}
.doc-main {
    flex: 1;
    min-height: 0;
    display: flex;
    position: relative;
}
.canvas {
    width: 1087px;
    background-color: #fff;
}
.art {
    width: 1087px;
    height: 573px;
}
.side-strip {
    width: 23px;
    background-color: #626360;
}
.vscroll {
    flex: 1;
    position: relative;
    background-color: #4a4a46;
    border-right: 1px solid #3c3c3c;
}
.sc-up, .sc-down {
    position: absolute;
    left: 3px;
    width: 10px;
    height: 6px;
}
.sc-up {
    top: 3px;
}
.sc-down {
    bottom: 5px;
}
.vthumb {
    position: absolute;
    left: 1px;
    top: 271px;
    width: 14px;
    height: 25px;
    border-radius: 6px;
    background-color: #62655f;
}
.status {
    height: 16px;
    display: flex;
    align-items: center;
    background-color: #4b4b4b;
    border-bottom: 1px solid #3a3a3a;
    font-size: 11px;
    color: #c8c8c8;
    position: relative;
}
.zoom-field {
    width: 55px;
    height: 100%;
    padding-left: 6px;
    line-height: 21px;
    background-color: #444;
    border-right: 1px solid #555;
    border-left: 1px solid #555;
}
.st-chev {
    width: 17px;
    display: flex;
    justify-content: center;
}
.st-nav {
    width: 26px;
    height: 8px;
    margin: 0 8px 0 9px;
}
.st-nav.after {
    margin: 0 0 0 7px;
}
.page-field {
    width: 40px;
    height: 100%;
    padding-left: 3px;
    line-height: 21px;
    background-color: #444;
}
.st-label {
    margin-left: 89px;
    width: 40px;
    padding-top: 5px;
    color: #b0b0b0;
    font-size: 10.5px;
}
.st-play {
    width: 5px;
    height: 9px;
    margin-left: 88px;
}
.st-back {
    width: 5px;
    height: 9px;
    margin-left: 12px;
}
.hthumb {
    position: absolute;
    left: 762px;
    top: 1px;
    width: 24px;
    height: 14px;
    border-radius: 7px;
    background-color: #6a6a6a;
}

/* collapsed panels */
.panels {
    width: 81px;
    flex: none;
    display: flex;
    background-color: #4f4f4f;
}
.panel-col {
    width: 41px;
    border-right: 1px solid #3f3f3f;
}
.panel-col:last-child {
    width: 40px;
    border-right: none;
}
.panels .collapse {
    text-align: right;
    padding-right: 6px;
}
.pgroup {
    padding: 9px 0 3px;
    border-bottom: 1px solid #3d3d3d;
    background: linear-gradient(#616161, #616161) center 4px / 14px 2px no-repeat;
}
.picon {
    height: 28px;
    display: flex;
    align-items: center;
    justify-content: center;
}
.picon svg {
    width: 18px;
    height: 18px;
}
.char-a {
    padding-right: 2px;
    border-right: 1px solid #aaa;
    font-family: "Noto Sans", sans-serif;
    font-size: 17px;
    line-height: 19px;
    color: #d4d4d4;
}
.open-o {
    font-family: "Liberation Serif", serif;
    font-style: italic;
    font-size: 20px;
    color: #9a9a9a;
}
.gradient-icon {
    width: 17px;
    height: 13px;
    background: linear-gradient(to right, #333, #eee);
    border: 1px solid #ccc;
}

/* taskbar */
.taskbar {
    height: 35px;
    display: flex;
    align-items: center;
    border-bottom: 3px solid #000;
    background: linear-gradient(to right, #2c2e2b 0, #2c2e2b 620px, #4b3a30 700px, #48493a 860px, #46493a 100%);
    position: relative;
}
.start {
    width: 41px;
    display: flex;
    justify-content: center;
}
.start svg {
    width: 14px;
    height: 14px;
}
.search {
    width: 286px;
    height: 100%;
    padding-left: 9px;
    display: flex;
    align-items: center;
    gap: 9px;
    background-color: #3d3e3c;
    font-size: 13px;
    color: #dcdcdc;
}
.search svg {
    width: 14px;
    height: 14px;
}
.task-icons {
    display: flex;
    height: 100%;
}
.task {
    width: 41px;
    height: 100%;
    display: flex;
    align-items: center;
    justify-content: center;
}
.task svg {
    width: 18px;
    height: 18px;
}
.task.pbi {
    background-color: #7d7f14;
    border-bottom: 2px solid #f2e94a;
}
.task.ai-task {
    background-color: #70736f;
    border-bottom: 2px solid #9cc;
}
.task .ai-logo {
    width: 18px;
    height: 18px;
}
.tray {
    position: absolute;
    left: 1033px;
    top: 8px;
    display: flex;
    align-items: center;
    gap: 11px;
}
.tray svg {
    width: 12px;
    height: 14px;
}
.tray .mic {
    width: 9px;
    height: 18px;
}
.clock {
    position: absolute;
    left: 1154px;
    top: 20px;
    font-size: 10px;
    line-height: 12px;
    color: #ccc;
    white-space: nowrap;
}

/* recorder widget */
.recorder {
    position: absolute;
    left: 1079px;
    top: 675px;
    width: 201px;
    height: 36px;
    display: flex;
    align-items: center;
    padding-left: 13px;
    background-color: #1b2127;
    border-bottom: 1px solid #c8c8c8;
}
.rec-stop {
    width: 18px;
    height: 18px;
    padding: 4px;
    border-radius: 50%;
    background-color: #fff;
}
.rec-stop i {
    display: block;
    width: 100%;
    height: 100%;
    border-radius: 2px;
    background-color: #d81b60;
}
.rec-pause {
    width: 18px;
    height: 18px;
    margin-left: 6px;
    display: flex;
    align-items: center;
    justify-content: center;
    gap: 2px;
    border: 1px solid #7d8a8c;
    border-radius: 50%;
}
.rec-pause i {
    display: block;
    width: 2px;
    height: 6px;
    background-color: #7d8a8c;
}
.rec-time {
    width: 54px;
    margin-left: 11px;
    font-family: "Open Sans", sans-serif;
    font-size: 14px;
    color: #d0dada;
}
.rec-shield {
    width: 11px;
    height: 11px;
    margin-left: 11px;
}
.rec-ctl {
    width: 10px;
    height: 10px;
    margin-left: 5px;
}
.rec-ctl.expand {
    margin-left: 13px;
}
```
